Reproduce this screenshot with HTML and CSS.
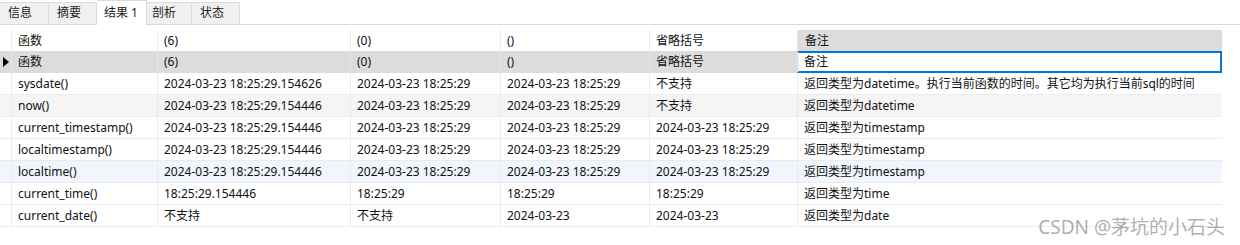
FILE: index.html
```html
<!DOCTYPE html>
<html lang="zh-CN">
<head>
  <meta charset="UTF-8" />
  <title>结果 1</title>
  <link rel="stylesheet" href="styles.css">
</head>
<body>
  <div class="tabs">
    <div class="tab t1">信息</div>
    <div class="tab t2">摘要</div>
    <div class="tab t3 active">结果 1</div>
    <div class="tab t4">剖析</div>
    <div class="tab t5">状态</div>
  </div>

  <div class="grid">
    <div class="row head">
      <div class="ind"></div>
      <div class="cell">函数</div>
      <div class="cell">(6)</div>
      <div class="cell">(0)</div>
      <div class="cell">()</div>
      <div class="cell">省略括号</div>
      <div class="cell sel-col">备注</div>
    </div>
    <div class="row selected">
      <div class="ind"><span class="arrow"></span></div>
      <div class="cell">函数</div>
      <div class="cell">(6)</div>
      <div class="cell">(0)</div>
      <div class="cell">()</div>
      <div class="cell">省略括号</div>
      <div class="cell focus">备注</div>
    </div>
    <div class="row">
      <div class="ind"></div>
      <div class="cell">sysdate()</div>
      <div class="cell">2024-03-23 18:25:29.154626</div>
      <div class="cell">2024-03-23 18:25:29</div>
      <div class="cell">2024-03-23 18:25:29</div>
      <div class="cell">不支持</div>
      <div class="cell">返回类型为datetime。执行当前函数的时间。其它均为执行当前sql的时间</div>
    </div>
    <div class="row alt">
      <div class="ind"></div>
      <div class="cell">now()</div>
      <div class="cell">2024-03-23 18:25:29.154446</div>
      <div class="cell">2024-03-23 18:25:29</div>
      <div class="cell">2024-03-23 18:25:29</div>
      <div class="cell">不支持</div>
      <div class="cell">返回类型为datetime</div>
    </div>
    <div class="row">
      <div class="ind"></div>
      <div class="cell">current_timestamp()</div>
      <div class="cell">2024-03-23 18:25:29.154446</div>
      <div class="cell">2024-03-23 18:25:29</div>
      <div class="cell">2024-03-23 18:25:29</div>
      <div class="cell">2024-03-23 18:25:29</div>
      <div class="cell">返回类型为timestamp</div>
    </div>
    <div class="row">
      <div class="ind"></div>
      <div class="cell">localtimestamp()</div>
      <div class="cell">2024-03-23 18:25:29.154446</div>
      <div class="cell">2024-03-23 18:25:29</div>
      <div class="cell">2024-03-23 18:25:29</div>
      <div class="cell">2024-03-23 18:25:29</div>
      <div class="cell">返回类型为timestamp</div>
    </div>
    <div class="row hover">
      <div class="ind"></div>
      <div class="cell">localtime()</div>
      <div class="cell">2024-03-23 18:25:29.154446</div>
      <div class="cell">2024-03-23 18:25:29</div>
      <div class="cell">2024-03-23 18:25:29</div>
      <div class="cell">2024-03-23 18:25:29</div>
      <div class="cell">返回类型为timestamp</div>
    </div>
    <div class="row">
      <div class="ind"></div>
      <div class="cell">current_time()</div>
      <div class="cell">18:25:29.154446</div>
      <div class="cell">18:25:29</div>
      <div class="cell">18:25:29</div>
      <div class="cell">18:25:29</div>
      <div class="cell">返回类型为time</div>
    </div>
    <div class="row">
      <div class="ind"></div>
      <div class="cell">current_date()</div>
      <div class="cell">不支持</div>
      <div class="cell">不支持</div>
      <div class="cell">2024-03-23</div>
      <div class="cell">2024-03-23</div>
      <div class="cell">返回类型为date</div>
    </div>
  </div>

  <div class="watermark">CSDN @茅坑的小石头</div>
</body>
</html>
```

FILE: styles.css
```css
:root {
  --linha: #ebebeb;
  --cinza-sel: #dcdcdc;
  --azul: #0078d7;
  --texto: #111;
}
body {
  margin: 0;
  font-family: "Noto Sans", "Noto Sans CJK SC", sans-serif;
  font-size: 12px;
  color: var(--texto);
  background: #fff;
  position: relative;
  height: 245px;
  overflow: hidden;
}
.tabs {
  display: flex;
  align-items: flex-end;
  height: 24px;
  border-bottom: 1px solid #dadada;
}
.tab {
  box-sizing: border-box;
  height: 22px;
  line-height: 20px;
  padding-left: 8px;
  background: #f0f0f0;
  border: 1px solid #dadada;
  border-bottom: none;
  border-left: none;
  color: #222;
}
.t1 { width: 49px; }
.t2 { width: 48px; }
.t3 { width: 50px; padding-left: 7px; }
.t4 { width: 45px; padding-left: 5px; }
.t5 { width: 48px; }
.tab.active {
  background: #fff;
  height: 25px;
  line-height: 24px;
  margin-bottom: -1px;
}
.grid {
  margin-top: 5px;
  width: 1222px;
}
.row {
  display: grid;
  grid-template-columns: 11px 146px 193px 150px 149px 148px 425px;
  height: 22px;
  box-sizing: border-box;
  border-bottom: 1px solid var(--linha);
}
.row.head {
  height: 21px;
  border-bottom: none;
}
.row.selected { background: var(--cinza-sel); border-bottom: none; }
.row.alt { background: #f5f5f5; }
.row.hover { background: #f0f6fc; }
.cell {
  box-sizing: border-box;
  padding-left: 6px;
  line-height: 21px;
  white-space: nowrap;
  overflow: hidden;
  border-left: 1px solid var(--linha);
}
.row.selected .cell { border-left-color: #e6e6e6; }
.cell.sel-col { background: var(--cinza-sel); padding-left: 7px; }
.cell.focus {
  background: #fff;
  border: 2px solid var(--azul);
  padding-left: 5px;
  line-height: 18px;
}
.ind {
  display: flex;
  align-items: center;
  padding-left: 3px;
}
.arrow {
  width: 0;
  height: 0;
  border-top: 5px solid transparent;
  border-bottom: 5px solid transparent;
  border-left: 6px solid #000;
}
.watermark {
  position: absolute;
  right: 15px;
  bottom: 5px;
  font-size: 19px;
  color: rgba(120, 120, 120, 0.6);
}
```
